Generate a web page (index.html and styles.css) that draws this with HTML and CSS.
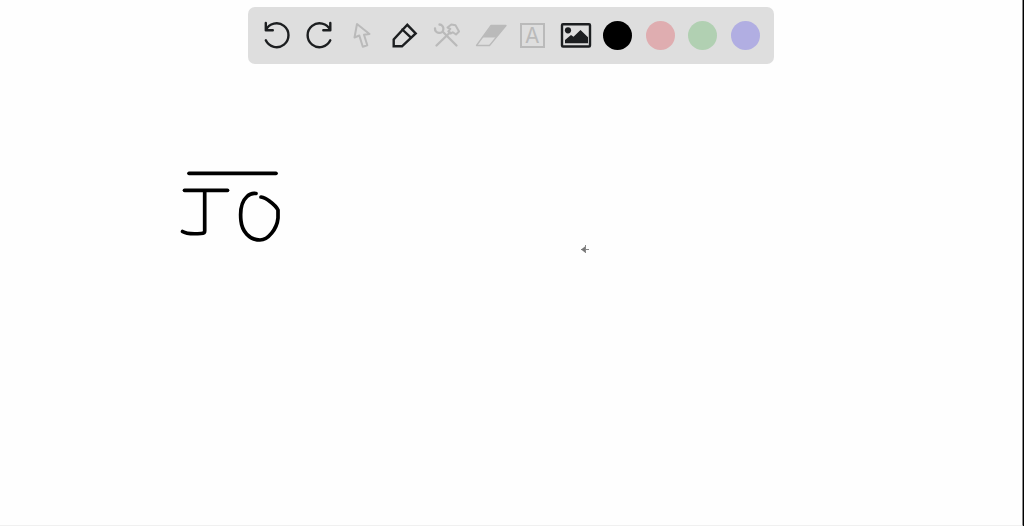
FILE: index.html
```html
<!DOCTYPE html>
<html lang="en">
<head>
    <meta charset="UTF-8">
    <meta name="viewport" content="width=device-width, initial-scale=1.0">
    <title>Whiteboard</title>
    <link rel="stylesheet" href="styles.css">
</head>
<body>

<div class="board">
    <!-- strokes on the canvas -->
    <svg class="canvas" aria-hidden="true">
        <g class="ink">
            <path d="M189 173.300H276"/>
            <path d="M184.500 190.300H227.500"/>
            <path d="M204.700 191V231Q204.700 233.500 201 233.500Q187 234.500 182.500 231.500"/>
            <path d="M256 193.500Q251 192.500 247 196.500C241 202 240 212 241 221C242 231 249 240 260 240C268 240 277 229 278 218V210Q276 206 270 201.500Q265 197.500 261 197"/>
        </g>
        <g class="pen-cursor">
            <path d="M581 249.500H589M585.500 245V253"/>
            <path class="pen-tip" d="M581 249.500L585 246.500V252.500Z"/>
        </g>
    </svg>

    <div class="toolbar" role="toolbar" aria-label="Drawing tools">
        <button class="tool" aria-label="Undo">
            <svg class="icon" viewBox="0 0 37 37"><path d="M7.800 6V13.200H14.800M7.800 13.200A11.900 11.900 0 1 1 7.800 23.300"/></svg>
        </button>
        <button class="tool" aria-label="Redo">
            <svg class="icon" viewBox="0 0 37 37"><path d="M30.300 6V13.200H23.300M30.300 13.200A11.900 11.900 0 1 0 30.300 23.300"/></svg>
        </button>
        <button class="tool muted" aria-label="Select">
            <svg class="icon" viewBox="0 0 37 37"><path d="M14 7L11.500 20.500L16.300 18.500L19.800 29.800L24.300 28.300L21 17.800L26.500 17Z"/></svg>
        </button>
        <button class="tool" aria-label="Pen">
            <svg class="icon sharp" viewBox="0 0 37 37"><path d="M7.700 29.300V22.500L21.300 7.800L29.700 16.500L16 29.300ZM16.300 12.500L25 20.700"/></svg>
        </button>
        <button class="tool muted" aria-label="Tools">
            <svg class="icon" viewBox="0 0 37 37">
                <path class="bold" d="M11.500 7.500A4.200 4.200 0 1 1 7 11.500M14.800 14.800L28.500 28.500"/>
                <path class="bold" d="M8.500 28.500L22 15.500"/>
                <path d="M19.500 10.500L23.300 7.500L27.500 8.300L31 14.500L28 17.500L24.800 15.300L22.500 16.500L20.300 14.300L22.300 11.800Z"/>
            </svg>
        </button>
        <button class="tool muted" aria-label="Eraser">
            <svg class="icon" viewBox="0 0 37 37">
                <path class="thin" d="M5.500 28.500H18.500L35 8.500H20Z"/>
                <path class="fill" d="M11.500 20.500H25L35 8.500H20.500Z"/>
            </svg>
        </button>
        <button class="tool muted" aria-label="Text">
            <span class="text-icon">A</span>
        </button>
        <button class="tool" aria-label="Image">
            <svg class="icon" viewBox="0 0 37 37">
                <rect x="6" y="7.300" width="28" height="22.200" rx="1"/>
                <circle class="fill" cx="12" cy="13.300" r="3.100"/>
                <path class="fill" d="M9 26.300V23L15 18L17.500 19.700L24.500 13L32 20.300V26.300Z"/>
            </svg>
        </button>
        <button class="tool" aria-label="Black"><span class="swatch black"></span></button>
        <button class="tool" aria-label="Red"><span class="swatch red"></span></button>
        <button class="tool" aria-label="Green"><span class="swatch green"></span></button>
        <button class="tool" aria-label="Blue"><span class="swatch blue"></span></button>
    </div>
</div>

</body>
</html>
```
FILE: styles.css
```css
* { margin: 0; padding: 0; box-sizing: border-box; }
body { background: #000; padding-right: 1px; font-family: Inter, "Liberation Sans", sans-serif; }
.board { position: relative; display: flex; justify-content: center; align-items: flex-start; min-height: 100vh; padding: 7px; background: #fefefe; border-right: 1px solid #888; border-bottom: 1px solid #f0f0f0; }

/* toolbar */
.toolbar { position: relative; display: grid; grid-template-columns: repeat(12, 1fr); width: 100%; max-width: 526px; padding: 0 7px; background: #dedede; border-radius: 7px; }
.tool { display: flex; align-items: center; justify-content: center; padding: 10px 0; border: none; background: none; color: #1c1e20; font-family: inherit; cursor: pointer; }
.muted { color: #bababa; }
.icon { width: 37px; height: 37px; flex: none; fill: none; stroke: currentColor; stroke-width: 2.4; stroke-linecap: round; stroke-linejoin: round; }
.sharp { stroke-linejoin: miter; }
.muted .icon { stroke-width: 2; }
.icon .bold { stroke-width: 2.3; }
.icon .fill { fill: currentColor; stroke: none; }
.icon .thin { stroke-width: 1.3; }
.text-icon { width: 25px; height: 25px; border: 2px solid currentColor; font-size: 21px; font-weight: 400; line-height: 21px; text-align: center; }
.swatch { width: 29px; height: 29px; flex: none; border-radius: 50%; }
.black { background: #000; }
.red { background: #dfadb0; }
.green { background: #b1d0b2; }
.blue { background: #b1aee2; }

/* canvas */
.canvas { position: absolute; top: 0; left: 0; width: 100%; height: 100%; }
.ink { fill: none; stroke: #000; stroke-width: 3.7; stroke-linecap: round; stroke-linejoin: round; }
.pen-cursor { fill: none; stroke: #888; stroke-width: 1; }
.pen-cursor .pen-tip { fill: #777; stroke: none; }
```
